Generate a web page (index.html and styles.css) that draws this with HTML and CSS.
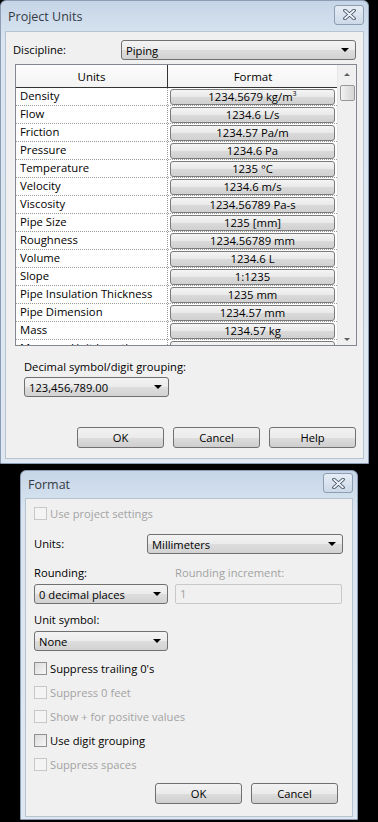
FILE: index.html
```html
<!DOCTYPE html>
<html lang="en">
<head>
    <meta charset="UTF-8">
    <meta name="viewport" content="width=device-width, initial-scale=1.0">
    <title>Project Units</title>
    <link rel="stylesheet" href="styles.css">
</head>
<body>
    <!-- Project Units dialog -->
    <div class="window units-window">
        <div class="titlebar">
            <span class="title">Project Units</span>
            <div class="close-btn">
                <svg width="17" height="11" viewBox="0 0 17 11"><path d="M4 1.5 L13 9.5 M13 1.5 L4 9.5" stroke="#3d4c60" stroke-width="3.6" stroke-linecap="round"/><path d="M4 1.5 L13 9.5 M13 1.5 L4 9.5" stroke="#eef2f7" stroke-width="1.8" stroke-linecap="round"/></svg>
            </div>
        </div>
        <div class="client">
            <div class="field-row discipline-row">
                <span class="label">Discipline:</span>
                <div class="combo discipline-combo"><span>Piping</span><i class="arrow"></i></div>
            </div>
            <div class="grid">
                <div class="grid-main">
                    <div class="grid-head">
                        <div class="head-cell">Units</div>
                        <div class="head-cell">Format</div>
                    </div>
                    <div class="grid-row"><div class="unit-cell">Density</div><div class="fmt-cell"><div class="fmt-btn">1234.5679 kg/m<sup>3</sup></div></div></div>
                    <div class="grid-row"><div class="unit-cell">Flow</div><div class="fmt-cell"><div class="fmt-btn">1234.6 L/s</div></div></div>
                    <div class="grid-row"><div class="unit-cell">Friction</div><div class="fmt-cell"><div class="fmt-btn">1234.57 Pa/m</div></div></div>
                    <div class="grid-row"><div class="unit-cell">Pressure</div><div class="fmt-cell"><div class="fmt-btn">1234.6 Pa</div></div></div>
                    <div class="grid-row"><div class="unit-cell">Temperature</div><div class="fmt-cell"><div class="fmt-btn">1235 °C</div></div></div>
                    <div class="grid-row"><div class="unit-cell">Velocity</div><div class="fmt-cell"><div class="fmt-btn">1234.6 m/s</div></div></div>
                    <div class="grid-row"><div class="unit-cell">Viscosity</div><div class="fmt-cell"><div class="fmt-btn">1234.56789 Pa-s</div></div></div>
                    <div class="grid-row"><div class="unit-cell">Pipe Size</div><div class="fmt-cell"><div class="fmt-btn">1235 [mm]</div></div></div>
                    <div class="grid-row"><div class="unit-cell">Roughness</div><div class="fmt-cell"><div class="fmt-btn">1234.56789 mm</div></div></div>
                    <div class="grid-row"><div class="unit-cell">Volume</div><div class="fmt-cell"><div class="fmt-btn">1234.6 L</div></div></div>
                    <div class="grid-row"><div class="unit-cell">Slope</div><div class="fmt-cell"><div class="fmt-btn">1:1235</div></div></div>
                    <div class="grid-row"><div class="unit-cell">Pipe Insulation Thickness</div><div class="fmt-cell"><div class="fmt-btn">1235 mm</div></div></div>
                    <div class="grid-row"><div class="unit-cell">Pipe Dimension</div><div class="fmt-cell"><div class="fmt-btn">1234.57 mm</div></div></div>
                    <div class="grid-row"><div class="unit-cell">Mass</div><div class="fmt-cell"><div class="fmt-btn">1234.57 kg</div></div></div>
                    <div class="grid-row"><div class="unit-cell">Mass per Unit Length</div><div class="fmt-cell"><div class="fmt-btn">1234.57 kg/m</div></div></div>
                </div>
                <div class="scrollbar">
                    <i class="sb-up"></i>
                    <div class="sb-thumb"></div>
                    <div class="sb-track"></div>
                    <i class="sb-down"></i>
                </div>
            </div>
            <div class="decimal-block">
                <div class="label">Decimal symbol/digit grouping:</div>
                <div class="combo decimal-combo"><span>123,456,789.00</span><i class="arrow"></i></div>
            </div>
            <div class="button-row">
                <div class="btn">OK</div>
                <div class="btn">Cancel</div>
                <div class="btn">Help</div>
            </div>
        </div>
    </div>

    <!-- Format dialog -->
    <div class="window format-window">
        <div class="titlebar">
            <span class="title">Format</span>
            <div class="close-btn">
                <svg width="17" height="11" viewBox="0 0 17 11"><path d="M4 1.5 L13 9.5 M13 1.5 L4 9.5" stroke="#3d4c60" stroke-width="3.6" stroke-linecap="round"/><path d="M4 1.5 L13 9.5 M13 1.5 L4 9.5" stroke="#eef2f7" stroke-width="1.8" stroke-linecap="round"/></svg>
            </div>
        </div>
        <div class="client format-client">
            <label class="check disabled first-check"><i class="box"></i>Use project settings</label>
            <div class="field-row units-row">
                <span class="label">Units:</span>
                <div class="combo units-combo"><span>Millimeters</span><i class="arrow"></i></div>
            </div>
            <div class="rounding-row">
                <div class="col">
                    <div class="label">Rounding:</div>
                    <div class="combo small-combo"><span>0 decimal places</span><i class="arrow"></i></div>
                </div>
                <div class="col inc-col">
                    <div class="label disabled-text">Rounding increment:</div>
                    <div class="textbox">1</div>
                </div>
            </div>
            <div class="symbol-block">
                <div class="label">Unit symbol:</div>
                <div class="combo small-combo"><span>None</span><i class="arrow"></i></div>
            </div>
            <div class="checks">
                <label class="check"><i class="box"></i>Suppress trailing 0's</label>
                <label class="check disabled"><i class="box"></i>Suppress 0 feet</label>
                <label class="check disabled"><i class="box"></i>Show + for positive values</label>
                <label class="check"><i class="box"></i>Use digit grouping</label>
                <label class="check disabled"><i class="box"></i>Suppress spaces</label>
            </div>
            <div class="button-row format-buttons">
                <div class="btn">OK</div>
                <div class="btn">Cancel</div>
            </div>
        </div>
    </div>
</body>
</html>
```

FILE: styles.css
```css
body {
    margin: 0;
    background: #000;
    font-family: "Segoe UI", "Open Sans", "Noto Sans", sans-serif;
    font-size: 11.2px;
    color: #000;
}
.window {
    background: linear-gradient(#c6d5e7, #dae5f1 40px, #dfe8f2);
    border: 1px solid #8c9db3;
    border-radius: 6px 6px 0 0;
    box-sizing: border-box;
    padding: 0 4px 4px;
}
.units-window {
    width: 369px;
    height: 464px;
}
.format-window {
    width: 338px;
    height: 350px;
    margin: 6px 0 0 20px;
}
.titlebar {
    display: flex;
    align-items: center;
    justify-content: space-between;
    height: 30px;
    padding-left: 3px;
}
.format-window .titlebar {
    height: 27px;
}
.title {
    font-size: 12.5px;
    color: #353b44;
}
.close-btn {
    width: 30px;
    height: 20px;
    box-sizing: border-box;
    border: 1px solid #8d9db2;
    border-radius: 3px;
    background: linear-gradient(#e6edf5, #cdd9e8);
    display: flex;
    align-items: center;
    justify-content: center;
    margin-top: -3px;
}
.client {
    background: #f0f0f0;
    height: 428px;
    box-sizing: border-box;
    padding: 8px 7px 0 7px;
    border: 1px solid #b7c3d1;
}
.field-row {
    display: flex;
    align-items: center;
    justify-content: space-between;
}
.label {
    line-height: 14px;
}
.disabled-text {
    color: #a3a3a3;
}
.combo {
    height: 20px;
    box-sizing: border-box;
    border: 1px solid #707070;
    border-radius: 3px;
    background: linear-gradient(#f3f3f3, #ebebeb 50%, #dddddd 51%, #d2d2d2);
    display: flex;
    align-items: center;
    justify-content: space-between;
    padding: 0 6px 0 4px;
}
.arrow {
    width: 0;
    height: 0;
    border-left: 4px solid transparent;
    border-right: 4px solid transparent;
    border-top: 4px solid #000;
}
.discipline-combo {
    width: 235px;
}
.grid {
    display: flex;
    width: 342px;
    height: 282px;
    margin: 4px 0 0 2px;
    border: 1px solid #828790;
    box-sizing: border-box;
    background: #fff;
}
.grid-main {
    width: 322px;
    overflow: hidden;
}
.grid-head {
    display: grid;
    grid-template-columns: 152px 170px;
    height: 23px;
    border-bottom: 1px solid #333;
    box-sizing: border-box;
    background: linear-gradient(#fdfdfd, #f3f3f3);
}
.head-cell {
    display: flex;
    align-items: center;
    justify-content: center;
    font-size: 11.5px;
}
.head-cell:first-child {
    border-right: 1px solid #333;
}
.grid-row {
    display: grid;
    grid-template-columns: 152px 170px;
    height: 18px;
    border-bottom: 1px dotted #9a9a9a;
    box-sizing: border-box;
}
.unit-cell {
    padding-left: 4px;
    line-height: 15px;
    font-size: 11.3px;
    border-right: 1px dotted #9a9a9a;
    white-space: nowrap;
}
.fmt-cell {
    padding: 1px 3px 0 2px;
}
.fmt-btn {
    height: 16px;
    box-sizing: border-box;
    border: 1px solid #7b7b7b;
    border-radius: 3px;
    background: linear-gradient(#f4f4f4, #e9e9e9 50%, #dadada 51%, #d0d0d0);
    text-align: center;
    line-height: 13px;
    font-size: 11.3px;
    white-space: nowrap;
}
.fmt-btn sup {
    font-size: 7px;
    line-height: 0;
}
.scrollbar {
    width: 18px;
    background: #f0f0f0;
    border-left: 1px solid #e6e6e6;
    display: flex;
    flex-direction: column;
    align-items: center;
}
.sb-up, .sb-down {
    width: 0;
    height: 0;
    border-left: 3.5px solid transparent;
    border-right: 3.5px solid transparent;
}
.sb-up {
    border-bottom: 3px solid #606060;
    margin-top: 8px;
}
.sb-down {
    border-top: 3px solid #606060;
    margin-bottom: 4px;
}
.sb-thumb {
    width: 15px;
    height: 16px;
    margin-top: 9px;
    box-sizing: border-box;
    border: 1px solid #979797;
    border-radius: 2px;
    background: linear-gradient(90deg, #f3f3f3, #e2e2e2 50%, #d6d6d6);
}
.sb-track {
    flex: 1;
}
.decimal-block {
    margin: 14px 0 0 11px;
}
.decimal-combo {
    width: 145px;
    margin-top: 3px;
}
.button-row {
    display: flex;
    justify-content: flex-end;
    gap: 9px;
    margin-top: 30px;
}
.btn {
    width: 87px;
    height: 21px;
    box-sizing: border-box;
    border: 1px solid #707070;
    border-radius: 3px;
    background: linear-gradient(#f2f2f2, #ebebeb 50%, #dddddd 51%, #cfcfcf);
    display: flex;
    align-items: center;
    justify-content: center;
}
.format-client {
    height: 319px;
    padding: 8px 9px 0 8px;
}
.check {
    display: flex;
    align-items: center;
    height: 13px;
}
.box {
    width: 13px;
    height: 13px;
    box-sizing: border-box;
    border: 1px solid #8e8f8f;
    background: linear-gradient(135deg, #dcdcdc, #f6f6f6);
    margin-right: 3px;
}
.check.disabled {
    color: #a3a3a3;
}
.check.disabled .box {
    border-color: #c8c8c8;
    background: #f4f4f4;
}
.units-row {
    margin-top: 14px;
}
.units-combo {
    width: 196px;
    margin-right: 0;
}
.rounding-row {
    display: flex;
    gap: 7px;
    margin-top: 12px;
}
.inc-col {
    flex: 1;
}
.small-combo {
    width: 134px;
    margin-top: 4px;
}
.textbox {
    width: 167px;
    height: 20px;
    margin-top: 4px;
    box-sizing: border-box;
    border: 1px solid #c9c9c9;
    border-radius: 2px;
    background: #f0f0f0;
    color: #a3a3a3;
    padding-left: 4px;
    line-height: 18px;
}
.symbol-block {
    margin-top: 9px;
}
.checks {
    display: flex;
    flex-direction: column;
    gap: 11px;
    margin-top: 11px;
}
.format-buttons {
    margin-top: 12px;
    padding-right: 5px;
}
```
